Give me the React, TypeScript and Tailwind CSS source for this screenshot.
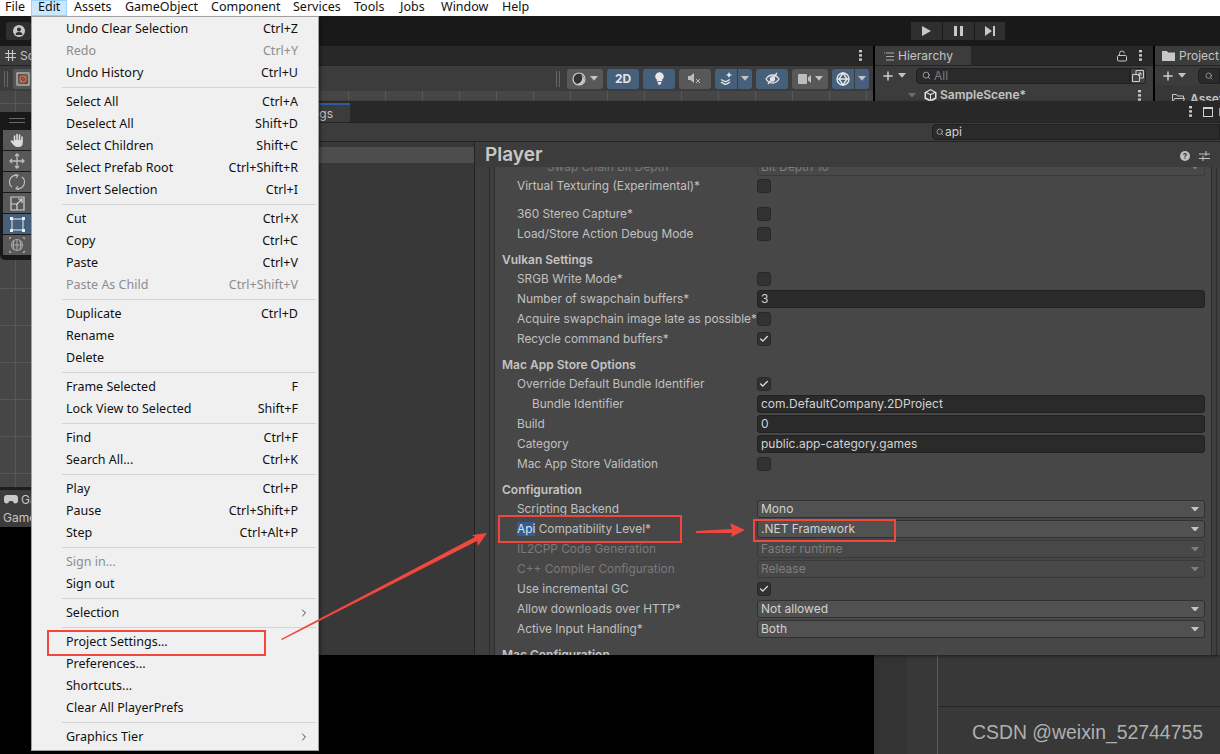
import React from "react";
import { Check, ChevronRight, LockOpen, Search, Plus } from "lucide-react";

type MenuItem = { label?: string; keys?: string; disabled?: boolean; sub?: boolean };

const menuBar = [
  { name: "File", w: "w-[33px]" },
  { name: "Edit", w: "w-[36px]" },
  { name: "Assets", w: "w-[51px]" },
  { name: "GameObject", w: "w-[86px]" },
  { name: "Component", w: "w-[82px]" },
  { name: "Services", w: "w-[61px]" },
  { name: "Tools", w: "w-[46px]" },
  { name: "Jobs", w: "w-[41px]" },
  { name: "Window", w: "w-[61px]" },
  { name: "Help", w: "w-[40px]" },
];

const editMenu: MenuItem[] = [
  { label: "Undo Clear Selection", keys: "Ctrl+Z" },
  { label: "Redo", keys: "Ctrl+Y", disabled: true },
  { label: "Undo History", keys: "Ctrl+U" },
  {},
  { label: "Select All", keys: "Ctrl+A" },
  { label: "Deselect All", keys: "Shift+D" },
  { label: "Select Children", keys: "Shift+C" },
  { label: "Select Prefab Root", keys: "Ctrl+Shift+R" },
  { label: "Invert Selection", keys: "Ctrl+I" },
  {},
  { label: "Cut", keys: "Ctrl+X" },
  { label: "Copy", keys: "Ctrl+C" },
  { label: "Paste", keys: "Ctrl+V" },
  { label: "Paste As Child", keys: "Ctrl+Shift+V", disabled: true },
  {},
  { label: "Duplicate", keys: "Ctrl+D" },
  { label: "Rename" },
  { label: "Delete" },
  {},
  { label: "Frame Selected", keys: "F" },
  { label: "Lock View to Selected", keys: "Shift+F" },
  {},
  { label: "Find", keys: "Ctrl+F" },
  { label: "Search All...", keys: "Ctrl+K" },
  {},
  { label: "Play", keys: "Ctrl+P" },
  { label: "Pause", keys: "Ctrl+Shift+P" },
  { label: "Step", keys: "Ctrl+Alt+P" },
  {},
  { label: "Sign in...", disabled: true },
  { label: "Sign out" },
  {},
  { label: "Selection", sub: true },
  {},
  { label: "Project Settings..." },
  { label: "Preferences..." },
  { label: "Shortcuts..." },
  { label: "Clear All PlayerPrefs" },
  {},
  { label: "Graphics Tier", sub: true },
];

const Arrow = ({ size = 8, color = "#c4c4c4" }: { size?: number; color?: string }) => (
  <svg width={size} height={size * 0.6} viewBox="0 0 10 6">
    <path d="M0 0h10L5 6z" fill={color} />
  </svg>
);

const Box = ({ on }: { on?: boolean }) => (
  <div className="flex h-[14px] w-[14px] items-center justify-center rounded-[3px] border border-[#282828] bg-[#323232]">
    {on && <Check size={10} strokeWidth={3} className="text-[#e4e4e4]" />}
  </div>
);

const TextField = ({ value }: { value: string }) => (
  <div className="flex h-[18px] w-full items-center rounded-[3px] border border-[#212121] bg-[#2a2a2a] px-[3px] text-[#d2d2d2]">
    {value}
  </div>
);

const Dropdown = ({ value, disabled }: { value: string; disabled?: boolean }) => (
  <div
    className={
      disabled
        ? "flex h-[18px] w-full items-center justify-between rounded-[3px] border border-[#3a3a3a] bg-[#484848] pl-[3px] pr-[5px] text-[#7e7e7e]"
        : "flex h-[18px] w-full items-center justify-between rounded-[3px] border border-[#303030] bg-[#515151] pl-[3px] pr-[5px] text-[#d2d2d2]"
    }
  >
    {value}
    <Arrow color={disabled ? "#7e7e7e" : "#c4c4c4"} />
  </div>
);

const Row = ({
  label,
  disabled,
  pad = "pl-[22px]",
  className,
  children,
}: {
  label: React.ReactNode;
  disabled?: boolean;
  pad?: string;
  className?: string;
  children?: React.ReactNode;
}) => (
  <div className={"flex h-5 shrink-0 items-center " + (className ?? "")}>
    <div
      className={
        "w-[262px] shrink-0 whitespace-nowrap pt-[2px] text-[11.85px] " +
        pad +
        (disabled ? " text-[#7a7a7a]" : " text-[#c0c0c0]")
      }
    >
      {label}
    </div>
    <div className="flex w-[448px] items-center">{children}</div>
  </div>
);

const Heading = ({ children }: { children: React.ReactNode }) => (
  <div className="mt-[6px] flex h-[19px] shrink-0 items-center pl-[7px] font-semibold text-[#c4c4c4]">{children}</div>
);

const SceneButton = ({ blue, w, children }: { blue?: boolean; w: string; children: React.ReactNode }) => (
  <div className={"flex h-5 items-center justify-center rounded-[3px] " + w + (blue ? " bg-[#46607c]" : " bg-[#585858]")}>
    {children}
  </div>
);

const Kebab = () => (
  <svg width="3" height="11" viewBox="0 0 3 11" fill="#c8c8c8">
    <rect width="3" height="2.4" />
    <rect y="4.2" width="3" height="2.4" />
    <rect y="8.4" width="3" height="2.4" />
  </svg>
);

const SceneToolbarButtons = () => (
  <div className="ml-auto flex items-center gap-1 pr-1">
    <div className="mr-[3px] h-4 w-1 border-x border-[#666]" />
    <SceneButton w="w-9">
      <svg width="14" height="14" viewBox="0 0 14 14" className="mr-1">
        <circle cx="7" cy="7" r="6" fill="#333" stroke="#ccc" strokeWidth="1.2" />
        <path d="M9 2.500a6 6 0 0 1-6 9.500 6 6 0 0 0 9-3 6 6 0 0 0-3-6.500z" fill="#ccc" />
      </svg>
      <Arrow />
    </SceneButton>
    <SceneButton blue w="w-8">
      <span className="text-[12px] font-bold text-[#e4e4e4]">2D</span>
    </SceneButton>
    <SceneButton blue w="w-8">
      <svg width="9" height="13" viewBox="0 0 10 14" fill="#e8e8e8">
        <path d="M5 0a4.600 4.600 0 0 0-3 8.200V10h6V8.200A4.600 4.600 0 0 0 5 0zM3 11h4v1.200L6 14H4l-1-1.800z" />
      </svg>
    </SceneButton>
    <SceneButton w="w-8">
      <svg width="14" height="12" viewBox="0 0 14 12" fill="#bdbdbd">
        <path d="M0 3h2.500L6 0v10L2.500 7H0z" />
        <path d="M8 6l4 4m0-4l-4 4" stroke="#bdbdbd" fill="none" />
      </svg>
    </SceneButton>
    <div className="flex h-5 w-[37px] gap-px">
      <div className="flex w-[22px] items-center justify-center rounded-l-[3px] bg-[#46607c]">
        <svg width="13" height="13" viewBox="0 0 13 13">
          <path d="M9 0l.900 2.100 2.100.900-2.100.900L9 6l-.900-2.100L6 3l2.100-.900z" fill="#e8e8e8" />
          <path d="M1 7.500l4.500 2.300L10 7.500M1 10.200l4.500 2.300 4.500-2.300" fill="none" stroke="#e8e8e8" strokeWidth="1.400" />
        </svg>
      </div>
      <div className="flex flex-1 items-center justify-center rounded-r-[3px] bg-[#46607c]">
        <Arrow />
      </div>
    </div>
    <SceneButton blue w="w-8">
      <svg width="15" height="13" viewBox="0 0 15 13" fill="none" stroke="#e4e4e4" strokeWidth="1.300">
        <path d="M1 7c2-3 4-4 6.500-4S12 4 14 7c-2 3-4 4-6.500 4S3 10 1 7z" />
        <circle cx="7.500" cy="7" r="2" fill="#e4e4e4" />
        <path d="M3 12L12 1" />
      </svg>
    </SceneButton>
    <SceneButton w="w-9">
      <svg width="13" height="10" viewBox="0 0 13 10" fill="#bdbdbd" className="mr-1">
        <rect width="9" height="10" rx="1" />
        <path d="M10 3.500L13 1v8l-3-2.500z" />
      </svg>
      <Arrow />
    </SceneButton>
    <div className="flex h-5 w-[37px] gap-px">
      <div className="flex w-[22px] items-center justify-center rounded-l-[3px] bg-[#46607c]">
        <svg width="14" height="14" viewBox="0 0 14 14" fill="none" stroke="#e8e8e8" strokeWidth="1.400">
          <circle cx="7" cy="7" r="6" />
          <path d="M7 1L3 7l4 6 4-6zM1 7h12" />
        </svg>
      </div>
      <div className="flex flex-1 items-center justify-center rounded-r-[3px] bg-[#46607c]">
        <Arrow />
      </div>
    </div>
  </div>
);

const ToolButton = ({ blue, children }: { blue?: boolean; children: React.ReactNode }) => (
  <div className={"flex h-5 items-center justify-center " + (blue ? "bg-[#46607c]" : "bg-[#585858]")}>{children}</div>
);

const ToolsOverlay = () => (
  <div className="absolute left-0 top-[21px] flex w-[31px] flex-col gap-px rounded-bl-[5px] bg-[#191919] pb-[5px] pl-[3px]">
    <div className="flex h-[17px] items-center justify-center">
      <div className="h-[5px] w-[16px] border-y border-[#6a6a6a]" />
    </div>
    <ToolButton>
      <svg width="16" height="16" viewBox="0 0 16 16" fill="#dcdcdc">
        <path d="M5.500 9V4M8 8V2.500M10.500 8V3M13 9V5" stroke="#dcdcdc" strokeWidth="1.600" strokeLinecap="round" fill="none" />
        <path d="M4.700 8h9v3a4 4 0 0 1-4 4H8a4 4 0 0 1-3-1.500L2 10a1 1 0 0 1 1.500-1.500L4.700 10z" />
      </svg>
    </ToolButton>
    <ToolButton>
      <svg width="16" height="16" viewBox="0 0 16 16" fill="none" stroke="#bdbdbd" strokeWidth="1.300">
        <path d="M8 1v14M1 8h14M6 3l2-2 2 2M6 13l2 2 2-2M3 6L1 8l2 2M13 6l2 2-2 2" />
      </svg>
    </ToolButton>
    <ToolButton>
      <svg width="16" height="16" viewBox="0 0 16 16" fill="none" stroke="#bdbdbd" strokeWidth="1.200">
        <path d="M3 13A6.500 6.500 0 0 1 8 1.500M13 3a6.500 6.500 0 0 1-5 11.500" />
        <path d="M6 0l3 1.500L7 4M10 16l-3-1.500L9 12" />
      </svg>
    </ToolButton>
    <ToolButton>
      <svg width="15" height="15" viewBox="0 0 15 15" fill="none" stroke="#d0d0d0" strokeWidth="1.200">
        <path d="M1 1h13v13H1zM1 8h6v6M6 9l6-6M8 3h4v4" />
      </svg>
    </ToolButton>
    <ToolButton blue>
      <svg width="15" height="15" viewBox="0 0 15 15">
        <rect x="2" y="2" width="11" height="11" fill="none" stroke="#e8e8e8" />
        <path d="M0 0h3v3H0zM12 0h3v3h-3zM0 12h3v3H0zM12 12h3v3h-3z" fill="#f0f0f0" />
      </svg>
    </ToolButton>
    <ToolButton>
      <svg width="16" height="16" viewBox="0 0 16 16" fill="none" stroke="#a8a8a8" strokeWidth="1.100">
        <circle cx="8" cy="8" r="5.500" />
        <path d="M8 2v12M2 8h12M5 3.500c-1 3-1 6 0 9M11 3.500c1 3 1 6 0 9" />
        <path d="M0 2l2-2M16 14l-2 2M0 14l2 2M16 2l-2-2" strokeWidth="1.600" />
      </svg>
    </ToolButton>
  </div>
);

const EditorBehind = () => (
  <div className="flex min-h-0 flex-1 gap-[2px] text-[12px] text-[#c4c4c4]">
    <div className="flex w-[873px] shrink-0 flex-col">
      {/* scene view */}
      <div className="flex h-[444px] shrink-0 flex-col border-b-[3px] border-[#1e1e1e]">
        <div className="flex h-[19px] shrink-0 items-center justify-between bg-[#282828] pr-[11px]">
          <div className="flex h-full w-[60px] items-center gap-[4px] bg-[#3c3c3c] pl-[5px]">
            <svg width="11" height="11" viewBox="0 0 11 11" fill="none" stroke="#c8c8c8" strokeWidth="1.200">
              <path d="M3.500 0v11M7.500 0v11M0 3.500h11M0 7.500h11" />
            </svg>
            <span>Scene</span>
          </div>
          <Kebab />
        </div>
        <div className="flex h-[26px] shrink-0 items-center border-t border-[#232323] bg-[#3c3c3c]">
          <div className="ml-[4px] h-4 w-1 border-x border-[#666]" />
          <div className="ml-[5px] flex h-5 w-5 items-center justify-center rounded-[2px] bg-[#555]">
            <svg width="14" height="14" viewBox="0 0 14 14" fill="none">
              <rect x="1" y="1" width="12" height="12" stroke="#ddd" />
              <circle cx="7" cy="7" r="3" stroke="#e8602c" strokeWidth="1.500" />
              <path d="M1 13L13 1" stroke="#e8602c" />
            </svg>
          </div>
          <SceneToolbarButtons />
        </div>
        <div className="relative flex-1 bg-[#464646] bg-[linear-gradient(to_right,#575757_1px,transparent_1px),linear-gradient(to_bottom,#575757_1px,transparent_1px)] bg-[size:37px_37px] bg-[position:-22px_-25px]">
          <ToolsOverlay />
        </div>
      </div>
      {/* game view */}
      <div className="flex h-[37px] shrink-0 flex-col">
        <div className="flex h-[19px] shrink-0 items-center gap-[3px] bg-[#3c3c3c] pl-[4px]">
          <svg width="14" height="9" viewBox="0 0 14 9" fill="#c8c8c8">
            <path d="M3 0h8a3 3 0 0 1 3 3v3a2.500 2.500 0 0 1-4.500 1.500L8.500 6h-3L4.500 7.500A2.500 2.500 0 0 1 0 6V3a3 3 0 0 1 3-3z" />
          </svg>
          <span>Game</span>
        </div>
        <div className="flex flex-1 items-center bg-[#3c3c3c] pl-[3px]">Game</div>
      </div>
      <div className="flex-1 bg-black" />
    </div>

    <div className="flex min-w-0 flex-1 flex-col">
      <div className="flex min-h-0 flex-1 gap-[2px]">
        {/* hierarchy */}
        <div className="flex w-[278px] shrink-0 flex-col bg-[#383838]">
          <div className="flex h-[19px] shrink-0 items-center justify-between bg-[#282828] pr-[11px]">
            <div className="flex h-full w-[96px] items-center gap-[4px] bg-[#3c3c3c] pl-[9px] pt-[1px]">
              <svg width="10" height="9" viewBox="0 0 10 9" fill="none" stroke="#aaa">
                <path d="M2 1h8M2 4.500h8M2 8h8M0 1h1" />
              </svg>
              Hierarchy
            </div>
            <div className="flex items-center gap-[11px]">
              <LockOpen size={12} className="text-[#c8c8c8]" />
              <Kebab />
            </div>
          </div>
          <div className="flex h-[20px] shrink-0 items-center border-t border-[#232323] bg-[#3c3c3c] pl-[6px]">
            <Plus size={14} strokeWidth={2.5} className="text-[#d0d0d0]" />
            <div className="ml-[3px]">
              <Arrow />
            </div>
            <div className="ml-[10px] flex h-4 w-[214px] items-center gap-[3px] rounded-l-[4px] border border-[#212121] bg-[#2a2a2a] pl-[5px] text-[#7c7c7c]">
              <Search size={9} className="text-[#bbb]" />
              All
            </div>
            <div className="flex h-4 w-4 items-center justify-center rounded-r-[3px] border border-[#212121] bg-[#444]">
              <svg width="12" height="12" viewBox="0 0 12 12" fill="none" stroke="#ccc">
                <path d="M4 4V.500h7.500V8H8M.500 4.500h7v7h-7zM6 6l3-3M6.500 3H9v2.500" />
              </svg>
            </div>
          </div>
          <div className="flex h-[20px] shrink-0 items-center bg-[#3c3c3c] pl-[33px] pr-[12px] font-semibold">
            <Arrow color="#6a6a6a" />
            <svg width="13" height="13" viewBox="0 0 13 13" fill="#e0e0e0" className="ml-[8px] mr-[3px]">
              <path d="M6.500 0l6 3.200v6.600l-6 3.200-6-3.200V3.200zM6.500 5L3 3.300l3.500-2 3.500 2zM6 6L2 4v4.500l4 2zM7 6v4.500l4-2V4z" fillRule="evenodd" />
            </svg>
            <span>SampleScene*</span>
            <div className="ml-auto">
              <Kebab />
            </div>
          </div>
          <div className="flex-1 bg-[#383838]" />
        </div>
        {/* project */}
        <div className="flex min-w-0 flex-1 flex-col overflow-hidden bg-[#383838]">
          <div className="flex h-[19px] shrink-0 items-center bg-[#282828]">
            <div className="flex h-full flex-1 items-center gap-[4px] bg-[#3c3c3c] pl-[7px] pt-[1px]">
              <svg width="13" height="10" viewBox="0 0 13 10" fill="#c8c8c8" className="shrink-0">
                <path d="M0 0h5l1 1.500h7V10H0z" />
              </svg>
              Project
            </div>
          </div>
          <div className="flex h-[20px] shrink-0 items-center border-t border-[#232323] bg-[#3c3c3c] pl-[6px]">
            <Plus size={14} strokeWidth={2.5} className="shrink-0 text-[#d0d0d0]" />
            <div className="ml-[3px]">
              <Arrow />
            </div>
            <div className="ml-[12px] flex h-4 flex-1 items-center rounded-l-[4px] border border-[#212121] bg-[#2a2a2a] pl-[6px]">
              <Search size={8} className="text-[#bbb]" />
            </div>
          </div>
          <div className="flex h-[24px] shrink-0 items-center gap-[5px] pl-[6px] pt-[4px] font-semibold">
            <Arrow color="#6a6a6a" />
            <svg width="13" height="10" viewBox="0 0 13 10" fill="none" stroke="#c8c8c8" className="ml-[6px] shrink-0">
              <path d="M.500 9.500v-9h4l1 1.500h6v2M.500 9.500l2-5h10l-2 5z" />
            </svg>
            <span>Assets</span>
          </div>
        </div>
      </div>
      {/* panels below the settings window */}
      <div className="-ml-[1px] flex h-[99px] shrink-0">
        <div className="w-[33px] bg-[#333333]" />
        <div className="w-[31px] border-r border-[#5a5a5a] bg-[#383838]" />
        <div className="flex flex-1 flex-col bg-[#383838]">
          <div className="h-[52px] border-b border-[#262626]" />
        </div>
      </div>
    </div>
  </div>
);

const SettingsWindow = () => (
  <div className="absolute left-[232px] top-[101px] flex h-[554px] w-[988px] flex-col bg-[#383838] font-['Inter',sans-serif] text-[12px] shadow-[0_1px_3px_rgba(0,0,0,0.5)]">
    <div className="flex h-[21px] shrink-0 items-end justify-between bg-[#282828]">
      <div className="flex h-[19px] w-[118px] items-center justify-end border-t-2 border-[#2f5d99] bg-[#3c3c3c] pr-[17px] text-[#c4c4c4]">
        Project Settings
      </div>
      <div className="flex h-full items-center">
        <Kebab />
        <div className="ml-[11px] h-[10px] w-[10px] border border-t-2 border-[#d0d0d0]" />
        <div className="ml-[6px] h-2 w-px bg-[#9a9a9a]" />
      </div>
    </div>
    <div className="flex h-[20px] shrink-0 items-center justify-end border-y border-[#232323] bg-[#3c3c3c]">
      <div className="flex h-4 w-[288px] items-center gap-px rounded-l-[4px] border border-[#212121] bg-[#2a2a2a] pl-[3px] text-[#d2d2d2]">
        <Search size={8} className="text-[#c8c8c8]" />
        api
      </div>
    </div>
    <div className="flex min-h-0 flex-1">
      <div className="w-[243px] shrink-0 border-r border-[#232323] pt-[5px]">
        <div className="h-4 bg-[#4d4d4d]" />
      </div>
      <div className="flex min-w-0 flex-1 flex-col bg-[#3e3e3e]">
        <div className="z-10 flex h-[25px] shrink-0 items-center bg-[#3c3c3c] pl-[10px] pr-[10px] pt-[2px]">
          <span className="text-[19px] font-semibold text-[#c8c8c8]">Player</span>
          <div className="ml-auto flex items-center gap-[9px]">
            <svg width="10" height="10" viewBox="0 0 10 10">
              <circle cx="5" cy="5" r="5" fill="#c0c0c0" />
              <text x="5" y="8" textAnchor="middle" fontSize="8" fontWeight="700" fill="#3c3c3c">
                ?
              </text>
            </svg>
            <svg width="11" height="10" viewBox="0 0 11 10" stroke="#c4c4c4" fill="none">
              <path d="M0 3h11M0 7.500h11M7 0v5M4 5v5" />
            </svg>
          </div>
        </div>
        <div className="flex min-h-0 flex-1 overflow-hidden">
          <div className="ml-[14px] w-[6px] shrink-0 border-x border-[#2c2c2c]" />
          <div className="flex w-[716px] shrink-0 flex-col bg-[#474747]">
            <Row label="Swap Chain Bit Depth" disabled pad="pl-[52px]" className="-mt-[10px]">
              <Dropdown value="Bit Depth 16" disabled />
            </Row>
            <Row label="Virtual Texturing (Experimental)*" className="-mt-[1px]">
              <Box />
            </Row>
            <Row label="360 Stereo Capture*" className="mt-2">
              <Box />
            </Row>
            <Row label="Load/Store Action Debug Mode">
              <Box />
            </Row>
            <Heading>Vulkan Settings</Heading>
            <Row label="SRGB Write Mode*">
              <Box />
            </Row>
            <Row label="Number of swapchain buffers*">
              <TextField value="3" />
            </Row>
            <Row label="Acquire swapchain image late as possible*">
              <Box />
            </Row>
            <Row label="Recycle command buffers*">
              <Box on />
            </Row>
            <Heading>Mac App Store Options</Heading>
            <Row label="Override Default Bundle Identifier">
              <Box on />
            </Row>
            <Row label="Bundle Identifier" pad="pl-[37px]">
              <TextField value="com.DefaultCompany.2DProject" />
            </Row>
            <Row label="Build">
              <TextField value="0" />
            </Row>
            <Row label="Category">
              <TextField value="public.app-category.games" />
            </Row>
            <Row label="Mac App Store Validation">
              <Box />
            </Row>
            <Heading>Configuration</Heading>
            <Row label="Scripting Backend">
              <Dropdown value="Mono" />
            </Row>
            <Row
              label={
                <>
                  <span className="bg-[#2f5d99] text-[#e0e0e0]">Api</span> Compatibility Level*
                </>
              }
            >
              <Dropdown value=".NET Framework" />
            </Row>
            <Row label="IL2CPP Code Generation" disabled>
              <Dropdown value="Faster runtime" disabled />
            </Row>
            <Row label="C++ Compiler Configuration" disabled>
              <Dropdown value="Release" disabled />
            </Row>
            <Row label="Use incremental GC">
              <Box on />
            </Row>
            <Row label="Allow downloads over HTTP*">
              <Dropdown value="Not allowed" />
            </Row>
            <Row label="Active Input Handling*">
              <Dropdown value="Both" />
            </Row>
            <Heading>Mac Configuration</Heading>
          </div>
          <div className="w-[6px] shrink-0 border-x border-[#2c2c2c] bg-[#3e3e3e]" />
        </div>
      </div>
    </div>
  </div>
);

const EditMenu = () => (
  <div className="absolute left-[31px] top-[16px] w-[288px] border border-[#a0a0a0] bg-[#f0f0f0] pb-[2px] pt-[1px] font-['Noto_Sans',sans-serif] text-[12.5px] text-[#111] shadow-[2px_2px_3px_rgba(0,0,0,0.35)]">
    {editMenu.map((item, i) =>
      item.label ? (
        <div
          key={i}
          className={
            "flex h-[22px] items-center justify-between pl-[34px] pr-[20px] " + (item.disabled ? "text-[#8d8d8d]" : "")
          }
        >
          <span>{item.label}</span>
          {item.keys && <span>{item.keys}</span>}
          {item.sub && <ChevronRight size={12} className="-mr-[12px] text-[#444]" />}
        </div>
      ) : (
        <div key={i} className="flex h-[7px] items-center pl-[30px] pr-[2px]">
          <div className="h-px w-full bg-[#d4d4d4]" />
        </div>
      ),
    )}
  </div>
);

const Annotations = () => (
  <svg className="pointer-events-none absolute left-0 top-0" width="1220" height="754" viewBox="0 0 1220 754">
    <g fill="none" stroke="#f0483e" strokeWidth="2">
      <rect x="48" y="631" width="217" height="24" />
      <rect x="499" y="516" width="182" height="26" />
      <rect x="754" y="520" width="141" height="21" />
    </g>
    <path d="M281 639L475 537L472 535L487 533L478 546L477 541L282 640z" fill="#f0483e" />
    <path d="M696 531L732 529L730 523L745 530L731 537L732 533L696 533z" fill="#f0483e" />
  </svg>
);

export default function App() {
  return (
    <div className="relative flex h-[754px] w-[1220px] flex-col overflow-hidden bg-black font-['Inter',sans-serif]">
      <div className="flex h-4 shrink-0 items-center overflow-hidden bg-white font-['Noto_Sans',sans-serif] text-[12.5px] leading-[13px] text-[#111]">
        <div className="flex h-full -translate-x-[2px]">
          {menuBar.map((item) => (
            <div
              key={item.name}
              className={
                item.name === "Edit"
                  ? "flex h-full items-center border border-[#99d1ff] bg-[#cce8ff] pb-[3px] pl-[6px] " + item.w
                  : "flex h-full items-center pb-[4px] pl-[7px] " + item.w
              }
            >
              {item.name}
            </div>
          ))}
        </div>
      </div>
      <div className="relative flex h-[30px] shrink-0 items-center bg-[#191919] pl-[911px]">
        <div className="flex gap-px">
          <div className="flex h-[18px] w-[31px] items-center justify-center bg-[#2f2f2f]">
            <svg width="9" height="10" viewBox="0 0 9 10" fill="#c8c8c8">
              <path d="M0 0l9 5-9 5z" />
            </svg>
          </div>
          <div className="flex h-[18px] w-[31px] items-center justify-center bg-[#2f2f2f]">
            <svg width="9" height="10" viewBox="0 0 9 10" fill="#c8c8c8">
              <path d="M0 0h3v10H0zM6 0h3v10H6z" />
            </svg>
          </div>
          <div className="flex h-[18px] w-[30px] items-center justify-center bg-[#2f2f2f]">
            <svg width="10" height="10" viewBox="0 0 10 10" fill="#c8c8c8">
              <path d="M0 0l7 5-7 5zM8 0h2v10H8z" />
            </svg>
          </div>
        </div>
      </div>
      <EditorBehind />
      <div className="absolute left-[6px] top-[22px] flex h-[18px] w-[25px] items-center justify-center rounded-[2px] bg-[#2f2f2f]">
        <svg width="12" height="12" viewBox="0 0 12 12">
          <circle cx="6" cy="6" r="6" fill="#c8c8c8" />
          <circle cx="6" cy="4.500" r="2" fill="#2f2f2f" />
          <path d="M2.500 10a3.500 3 0 0 1 7 0z" fill="#2f2f2f" />
        </svg>
      </div>
      <SettingsWindow />
      <EditMenu />
      <Annotations />
      <div className="absolute bottom-[12px] right-[17px] font-['Liberation_Sans',sans-serif] text-[19.4px] leading-none text-[#b0b0b0]">
        CSDN @weixin_52744755
      </div>
    </div>
  );
}
